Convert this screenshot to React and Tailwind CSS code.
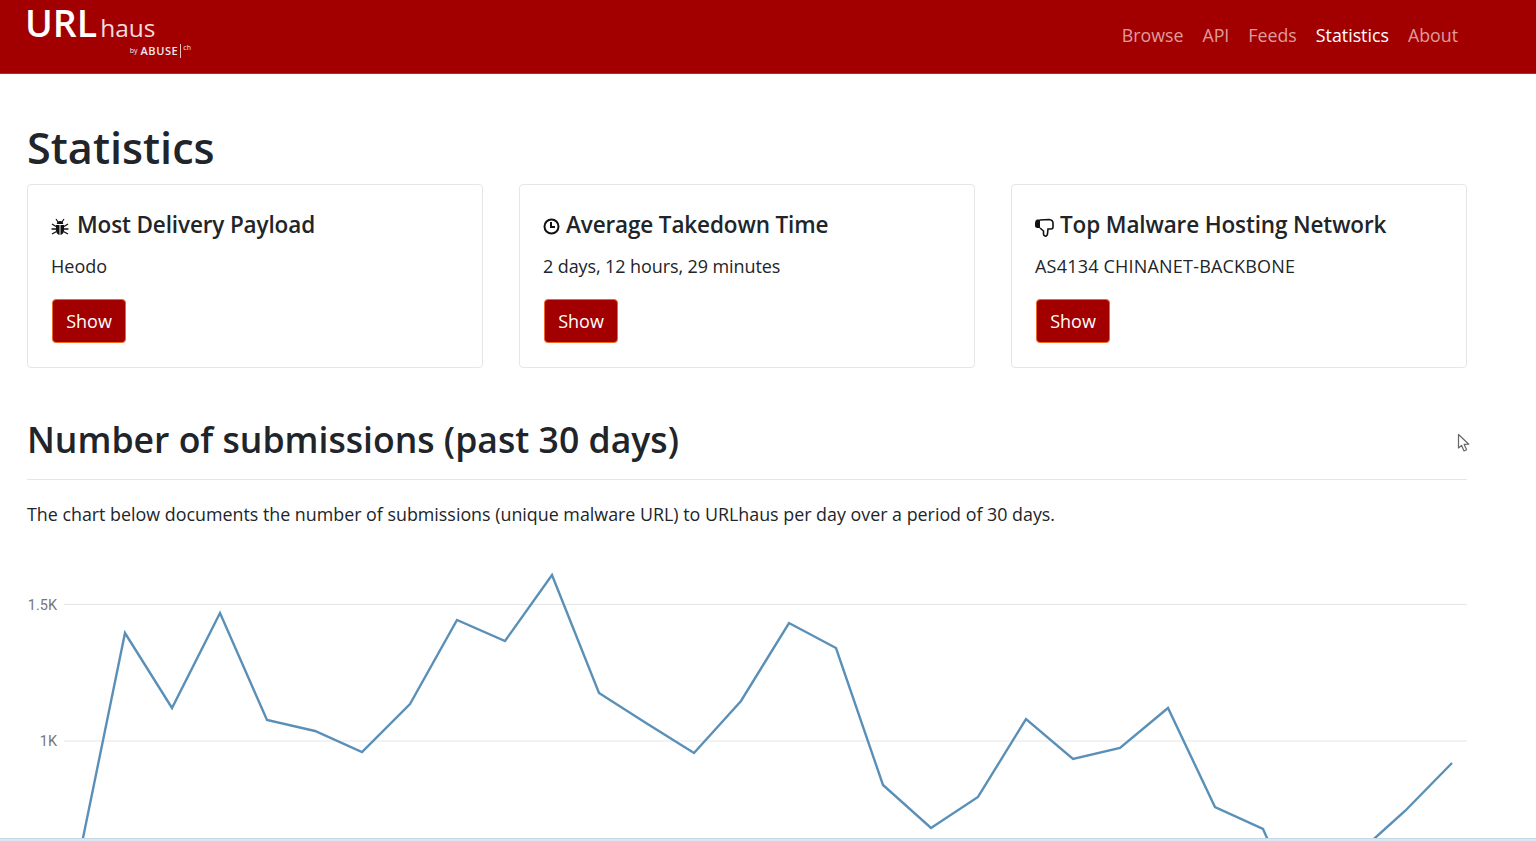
import React from "react";

const points = "78,860 83,838 125,633 172,708 220,613 267,720 315,731 362,752 410,704 457,620 505,641 552,575 599,693 646,723 694,753 741,701 789,623 836,648 883,785 931,828 978,797 1026,719 1073,759 1120,748 1168,708 1215,807 1263,829 1267,838 1272,850";
const points2 = "1365,847 1375,838 1405,811 1452,763";

function BugIcon() {
  return (
    <svg className="mt-[3px]" width="18" height="18" viewBox="0 0 18 18" fill="none">
      <path d="M5 1 L7 4 M13 1 L11 4" stroke="#111" strokeWidth="1.2" />
      <path d="M5.8 6 Q5.8 3 9 3 Q12.2 3 12.2 6 Z" fill="#111" />
      <path d="M5 7 H8.5 V17 Q5 16 5 12 Z M9.5 7 H13 V12 Q13 16 9.5 17 Z" fill="#111" />
      <path d="M1 6 L5 8.5 M0.5 11 H5 M1 16 L5.5 13.5 M17 6 L13 8.5 M17.5 11 H13 M17 16 L12.5 13.5" stroke="#111" strokeWidth="1.3" />
    </svg>
  );
}

function ClockIcon() {
  return (
    <svg className="mt-[3px]" width="17" height="17" viewBox="0 0 17 17" fill="none">
      <circle cx="8.5" cy="8.5" r="7" stroke="#111" strokeWidth="2" />
      <path d="M8 4 V9 H12" stroke="#111" strokeWidth="2" />
    </svg>
  );
}

function ThumbIcon() {
  return (
    <svg className="mt-[3px] -ml-px" width="20" height="20" viewBox="0 0 20 20" fill="none">
      <path d="M1 6 Q1 3 3 2.5 L6 2.5 L6 11 L3 11 Q1 10.5 1 9 Z" fill="#111" />
      <path d="M6 3 L15 2.5 Q19 3 19 6 L19 10 Q19 12 17 12 L14 12 L13.5 17 Q13 19.5 11 19 Q9.5 18.5 9.5 17 L9.5 14 L6 11" stroke="#111" strokeWidth="1.6" />
    </svg>
  );
}

function Card({ icon, title, text, gap, track }) {
  return (
    <div className="w-[456px] h-[184px] border border-[#e6e6e6] rounded-[4px] pl-[23px] pr-6 pt-[25px] bg-white">
      <h5 className={"flex items-center text-[22.5px] leading-[30px] font-semibold text-[#212529] tracking-[-0.13px] " + gap}>
        {icon}
        <span>{title}</span>
      </h5>
      <p className={"mt-[12px] text-[18px] leading-[29px] text-[#212529] " + track}>{text}</p>
      <button className="mt-[18px] ml-px w-[74px] h-[44px] pt-px bg-[#a20000] border border-[#ef6a1e] rounded-[4px] text-white text-[18px]">Show</button>
    </div>
  );
}

export default function App() {
  return (
    <div className="relative h-[841px] w-[1536px] overflow-hidden flex flex-col bg-white font-['Open_Sans','Noto_Sans',sans-serif]">
      <nav className="h-[74px] shrink-0 bg-[#a20000] border-b border-[#b52a2a] flex items-start justify-between pl-[25px] pr-[78px]">
        <div className="text-white w-[166px] pt-px">
          <div className="flex items-baseline">
            <span className="text-[37.5px] leading-[44px] font-semibold">URL</span>
            <span className="ml-[3px] text-[24.5px] leading-[44px] font-normal text-[#f3dcdc]">haus</span>
          </div>
          <div className="flex items-center justify-end h-[14px] -mt-[6px] text-[#eeeaea]">
            <span className="text-[7px] leading-[14px] mr-[3px]">by</span>
            <span className="text-[11px] leading-[14px] font-semibold tracking-[0.6px]">ABUSE</span>
            <span className="mx-[2px] w-px h-[14px] bg-[#e6c4c4]"></span>
            <span className="text-[7px] leading-[14px] -translate-y-[3px]">ch</span>
          </div>
        </div>
        <div className="flex gap-[19px] pt-[21px] text-[17.8px] leading-[28px] text-[#dd9c9c]">
          <span>Browse</span>
          <span>API</span>
          <span>Feeds</span>
          <span className="text-white">Statistics</span>
          <span>About</span>
        </div>
      </nav>

      <main className="flex-1 min-h-0 overflow-hidden pl-[27px] pr-[69px]">
        <h1 className="mt-[50px] text-[43.2px] leading-[48px] font-semibold text-[#212529]">Statistics</h1>
        <div className="mt-[12px] flex gap-[36px]">
          <Card gap="gap-[8px]" track="tracking-normal" icon={<BugIcon />} title="Most Delivery Payload" text="Heodo" />
          <Card gap="gap-[6px]" track="tracking-[-0.1px]" icon={<ClockIcon />} title="Average Takedown Time" text="2 days, 12 hours, 29 minutes" />
          <Card gap="gap-[6px]" track="tracking-[0.2px]" icon={<ThumbIcon />} title="Top Malware Hosting Network" text="AS4134 CHINANET-BACKBONE" />
        </div>
        <h2 className="mt-[49px] pb-[17px] border-b border-[#e6e6e6] text-[35.6px] leading-[45px] font-semibold text-[#212529]">Number of submissions (past 30 days)</h2>
        <p className="mt-[20px] text-[17.85px] leading-[29px] text-[#212529]">The chart below documents the number of submissions (unique malware URL) to URLhaus per day over a period of 30 days.</p>
        <svg className="block mt-[31px]" width="1440" height="300" viewBox="27 560 1440 300" fill="none">
          <line x1="64" x2="1467" y1="604.5" y2="604.5" stroke="#e6e6e6" strokeWidth="1.2" />
          <line x1="64" x2="1467" y1="741" y2="741" stroke="#e6e6e6" strokeWidth="1.2" />
          <text x="57" y="609.5" textAnchor="end" fill="#777" fontSize="14.5" fontFamily="Roboto, sans-serif">1.5K</text>
          <text x="57" y="745.5" textAnchor="end" fill="#777" fontSize="14.5" fontFamily="Roboto, sans-serif">1K</text>
          <polyline points={points} stroke="#5a90b8" strokeWidth="2.4" strokeLinejoin="miter" />
          <polyline points={points2} stroke="#5a90b8" strokeWidth="2.4" />
        </svg>
      </main>

      <div className="h-[3px] shrink-0 bg-[#dbe8f3] border-t border-[#c5d6e4]"></div>

      <svg className="absolute left-[1457px] top-[433px]" width="14" height="20" viewBox="0 0 14 20" fill="none">
        <path d="M1.5 1.5 L1.5 15 L4.6 12.4 L7 18 L9.6 16.8 L7.2 11.4 L11.8 11.2 Z" fill="#fff" stroke="#666" strokeWidth="1.2" strokeLinejoin="round" />
      </svg>
    </div>
  );
}
